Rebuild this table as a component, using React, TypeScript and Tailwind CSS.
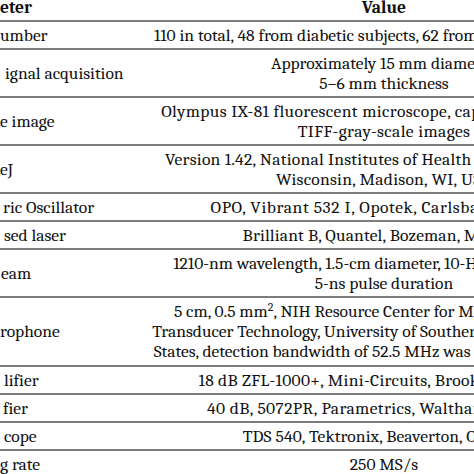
type Row = {
  label: string;
  pad: string;
  track?: string;
  extra?: string;
  value: React.ReactNode[];
};

const rows: Row[] = [
  { label: "umber", pad: "pl-0", value: ["110 in total, 48 from diabetic subjects, 62 from healthy volunteers"] },
  { label: "ignal acquisition", pad: "pl-[5px]", value: ["Approximately 15 mm diameter,", "5–6 mm thickness"] },
  {
    label: "e image",
    pad: "pl-0",
    track: "tracking-[0.4px]",
    value: ["Olympus IX-81 fluorescent microscope, captured with 16-bit", "TIFF-gray-scale images"],
  },
  {
    label: "eJ",
    pad: "pl-0",
    track: "tracking-[0.25px]",
    value: ["Version 1.42, National Institutes of Health and University of", "Wisconsin, Madison, WI, USA"],
  },
  { label: "ric Oscillator", pad: "pl-[3px]", track: "tracking-[0.6px]", value: ["OPO, Vibrant 532 I, Opotek, Carlsbad, CA, USA"] },
  { label: "sed laser", pad: "pl-[4px]", track: "tracking-[0.15px]", value: ["Brilliant B, Quantel, Bozeman, MT, USA"] },
  { label: "eam", pad: "pl-px", value: ["1210-nm wavelength, 1.5-cm diameter, 10-Hz repetition rate,", "5-ns pulse duration"] },
  {
    label: "rophone",
    pad: "pl-0",
    extra: "pb-[4px]",
    value: [
      <>
        5 cm, 0.5 mm<sup className="text-[12px]">2</sup>, NIH Resource Center for Medical Ultrasonic
      </>,
      "Transducer Technology, University of Southern California, United",
      "States, detection bandwidth of 52.5 MHz was measured at −10 dB",
    ],
  },
  { label: "lifier", pad: "pl-[4px]", track: "tracking-[0.3px]", value: ["18 dB ZFL-1000+, Mini-Circuits, Brooklyn, NY, USA"] },
  { label: "fier", pad: "pl-[3px]", track: "tracking-[0.4px]", value: ["40 dB, 5072PR, Parametrics, Waltham, MA, USA"] },
  { label: "cope", pad: "pl-[4px]", track: "tracking-[0.1px]", value: ["TDS 540, Tektronix, Beaverton, OR, USA"] },
  { label: "g rate", pad: "pl-0", value: ["250 MS/s"] },
];

const App = () => {
  return (
    <div className="w-[474px] h-[474px] overflow-hidden bg-white">
      <div className="-mt-[6px] w-[628px] font-serif [font-family:Liberation_Serif,serif] text-[17.5px] leading-[20px] text-[#111]">
        {/* Header */}
        <div className="grid grid-cols-[140px_488px] border-b-2 border-[#7d7d7d] font-bold">
          <div className="py-[3px]">eter</div>
          <div className="py-[3px] text-center">Value</div>
        </div>

        {rows.map((row, i) => (
          <div
            key={i}
            className={`grid grid-cols-[140px_488px] ${i < rows.length - 1 ? "border-b-2 border-[#7d7d7d]" : ""}`}
          >
            <div className={`flex items-center py-[3px] whitespace-nowrap ${row.pad} ${row.extra ?? ""}`}>
              {row.label}
            </div>
            <div className={`py-[3px] text-center whitespace-nowrap ${row.track ?? ""} ${row.extra ?? ""}`}>
              {row.value.map((line, j) => (
                <div key={j}>{line}</div>
              ))}
            </div>
          </div>
        ))}
      </div>
    </div>
  );
};

export default App;
